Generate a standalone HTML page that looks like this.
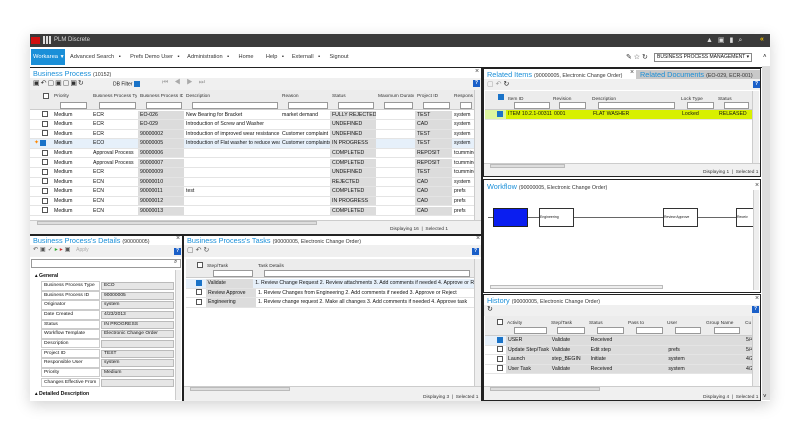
<!DOCTYPE html><html><head><meta charset="utf-8"><style>
*{box-sizing:border-box;margin:0;padding:0}
body{width:800px;height:445px;background:#fff;font-family:"Liberation Sans",sans-serif;font-size:5.2px;color:#111;position:relative;overflow:hidden;white-space:nowrap}
.a{position:absolute}
.t{color:#1a8fd8;font-size:7.3px}
.s{color:#333;font-size:5.3px}
.row{position:absolute;display:flex;height:9.6px;border-bottom:1px solid #e4e4e4;align-items:center;white-space:nowrap;overflow:hidden}
.row div{overflow:hidden;padding-left:2px;height:100%;line-height:9px}
.cb{display:inline-block;width:6px;height:6px;border:1px solid #555;background:#fff;vertical-align:middle}
.cbk{display:inline-block;width:6px;height:6px;background:#1a73c8;border:1px solid #1a73c8;vertical-align:middle}
.hdr{position:absolute;background:#ececec;border-bottom:1px solid #ccc}
.hc{position:absolute;font-size:4.8px;color:#333}
.inp{position:absolute;height:7px;background:#fff;border:1px solid #999}
.g{background:#dcdcdc}
.close{position:absolute;font-size:7px;color:#444}
.bar{position:absolute;background:#f0f0f0;border-top:1px solid #ccc}
.vs{position:absolute;background:#eee;border-left:1px solid #ccc}
.help{position:absolute;width:7px;height:7px;background:#1a5fc8;color:#fff;font-size:5px;text-align:center;line-height:7px;font-weight:bold}
</style></head><body>
<div class="a" style="left:30px;top:34px;width:740px;height:367px;box-shadow:0 4px 14px rgba(0,0,0,.18);background:#fff"></div>
<div class="a" style="left:30px;top:34px;width:740px;height:13px;background:#3a3a3a"></div>
<div class="a" style="left:31px;top:37px;width:9px;height:7px;background:#d01010"></div>
<div class="a" style="left:43px;top:36px;width:8px;height:8px;background:repeating-linear-gradient(90deg,#ddd 0 2px,transparent 2px 3px)"></div>
<div class="a" style="left:54px;top:37px;color:#ddd;font-size:6px">PLM Discrete</div>
<div class="a" style="left:706px;top:36px;color:#ddd;font-size:7px;letter-spacing:5px">▲▣▮⌕</div>
<div class="a" style="left:760px;top:36px;color:#f0c000;font-size:7px;font-weight:bold">«</div>
<div class="a" style="left:31px;top:49px;width:34px;height:16px;background:#1a8fd8;color:#fff;font-size:5.8px;line-height:16px;padding-left:2px">Workarea <span style="font-size:5px">▼</span></div>
<div class="a" style="left:70px;top:54px;font-size:5.6px;color:#333;white-space:pre">Advanced Search   ▪      Prefs Demo User   ▪     Administration   ▪      Home        Help   ▪     Externall   ▪      Signout</div>
<div class="a" style="left:626px;top:53px;font-size:7px;color:#333">✎ ☆ ↻</div>
<div class="a" style="left:654px;top:53px;width:98px;height:9px;border:1px solid #888;font-size:5px;padding-left:2px;line-height:7px">BUSINESS PROCESS MANAGEMENT ▾</div>
<div class="a" style="left:762px;top:66px;width:8px;height:334px;background:#ddd"></div>
<div class="a" style="left:763px;top:54px;font-size:6px">˄</div>
<div class="a" style="left:30px;top:67px;width:732px;height:1px;background:#222"></div>

<div class="a t" style="left:33px;top:69px">Business Process <span class="s">(10152)</span></div>
<div class="close" style="left:475px;top:68px">×</div>
<div class="a" style="left:30px;top:78px;width:451px;height:12px;background:#f0f0f0"></div>
<div class="a" style="left:33px;top:79px;font-size:7px;color:#333;letter-spacing:1px">▣↶▢▣▢▣↻</div>
<div class="a" style="left:113px;top:81px;font-size:5px">DB Filter <span class="cbk"></span></div>
<div class="a" style="left:162px;top:79px;font-size:7px;color:#aaa;letter-spacing:6px">⏮◀▶⏭</div>
<div class="help" style="left:473px;top:80px">?</div>
<div class="hdr" style="left:30px;top:90px;width:451px;height:20px"></div>
<div class="a" style="left:43px;top:93px"><span class="cb"></span></div>
<div class="hc" style="left:54px;top:94px">Priority</div>
<div class="hc" style="left:93px;top:94px;width:44px;overflow:hidden">Business Process Typ</div>
<div class="hc" style="left:140px;top:94px;width:43px;overflow:hidden">Business Process ID</div>
<div class="hc" style="left:186px;top:94px">Description</div>
<div class="hc" style="left:282px;top:94px">Reason</div>
<div class="hc" style="left:332px;top:94px">Status</div>
<div class="hc" style="left:378px;top:94px;width:36px;overflow:hidden">Maximum Duratio</div>
<div class="hc" style="left:417px;top:94px">Project ID</div>
<div class="hc" style="left:454px;top:94px;width:19px;overflow:hidden">Respons</div>
<div class="inp" style="left:60px;top:102px;width:27px"></div>
<div class="inp" style="left:99px;top:102px;width:37px"></div>
<div class="inp" style="left:146px;top:102px;width:36px"></div>
<div class="inp" style="left:192px;top:102px;width:86px"></div>
<div class="inp" style="left:288px;top:102px;width:40px"></div>
<div class="inp" style="left:338px;top:102px;width:36px"></div>
<div class="inp" style="left:384px;top:102px;width:29px"></div>
<div class="inp" style="left:423px;top:102px;width:27px"></div>
<div class="inp" style="left:460px;top:102px;width:12px"></div>
<div id="rows"></div>
<div class="vs" style="left:474px;top:90px;width:7px;height:130px"></div>
<div class="bar" style="left:30px;top:220px;width:451px;height:14px"></div>
<div class="a" style="left:37px;top:221px;width:280px;height:4px;background:#ddd;border:1px solid #bbb"></div>
<div class="a" style="left:390px;top:227px;font-size:4.8px;color:#333">Displaying 16 &nbsp;| &nbsp;Selected 1</div>
<div class="a" style="left:30px;top:234px;width:451px;height:2px;background:#222"></div>
<div class="a" style="left:481px;top:67px;width:2px;height:334px;background:#222"></div>

<div class="a t" style="left:33px;top:236px">Business Process's Details <span class="s">(90000005)</span></div>
<div class="close" style="left:176px;top:235px">×</div>
<div class="a" style="left:30px;top:245px;width:152px;height:12px;background:#f0f0f0"></div>
<div class="a" style="left:33px;top:246px;font-size:6px;color:#555;letter-spacing:2px">↶▣✓<span style="color:#3a3">▸</span><span style="color:#c33">▸</span>▣ <span style="color:#aaa;letter-spacing:0;font-size:5px">Apply</span></div>
<div class="help" style="left:174px;top:248px">?</div>
<div class="a" style="left:31px;top:259px;width:150px;height:9px;border:1px solid #999"></div>
<div class="a" style="left:174px;top:259px;font-size:6px">⌕</div>
<div class="a" style="left:35px;top:273px;font-size:5.2px;font-weight:bold">▴ General</div>
<div id="det"></div>
<div class="a" style="left:35px;top:391px;font-size:5.2px;font-weight:bold">▴ Detailed Description</div>
<div class="vs" style="left:175px;top:270px;width:6px;height:130px"></div>
<div class="a" style="left:182px;top:236px;width:2px;height:165px;background:#222"></div>

<div class="a t" style="left:187px;top:236px">Business Process's Tasks <span class="s">(90000005, Electronic Change Order)</span></div>
<div class="close" style="left:476px;top:235px">×</div>
<div class="a" style="left:184px;top:245px;width:297px;height:12px;background:#f0f0f0"></div>
<div class="a" style="left:187px;top:246px;font-size:7px;color:#555;letter-spacing:2px">▢↶↻</div>
<div class="help" style="left:472px;top:248px">?</div>
<div class="hdr" style="left:186px;top:259px;width:288px;height:19px"></div>
<div class="a" style="left:197px;top:262px"><span class="cb"></span></div>
<div class="hc" style="left:207px;top:264px">Step/Task</div>
<div class="hc" style="left:258px;top:264px">Task Details</div>
<div class="inp" style="left:213px;top:270px;width:40px"></div>
<div class="inp" style="left:264px;top:270px;width:206px"></div>
<div class="row" style="left:186px;top:279px;width:288px;background:#e6f0fa"><div style="width:20px;padding-left:10px"><span class="cbk"></span></div><div class="g" style="width:50px">Validate</div><div>1. Review Change Request 2. Review attachments 3. Add comments if needed 4. Approve or Reject</div></div>
<div class="row" style="left:186px;top:288.6px;width:288px"><div style="width:20px;padding-left:10px"><span class="cb"></span></div><div class="g" style="width:50px">Review Approve</div><div>1. Review Changes from Engineering 2. Add comments if needed 3. Approve or Reject</div></div>
<div class="row" style="left:186px;top:298.2px;width:288px"><div style="width:20px;padding-left:10px"><span class="cb"></span></div><div class="g" style="width:50px">Engineering</div><div>1. Review change request 2. Make all changes 3. Add comments if needed 4. Approve task</div></div>
<div class="vs" style="left:474px;top:259px;width:7px;height:128px"></div>
<div class="bar" style="left:184px;top:386px;width:297px;height:15px"></div>
<div class="a" style="left:190px;top:387px;width:100px;height:4px;background:#ddd;border:1px solid #bbb"></div>
<div class="a" style="left:423px;top:395px;font-size:4.8px;color:#333">Displaying 3 &nbsp;| &nbsp;Selected 1</div>

<div class="a" style="left:483px;top:68px;width:278px;height:109px;border:1px solid #222"></div>
<div class="a" style="left:636px;top:70px;width:124px;height:9px;background:#c8c8c8"></div>
<div class="a t" style="left:487px;top:70px">Related Items <span class="s">(90000005, Electronic Change Order)</span></div>
<div class="close" style="left:630px;top:69px">×</div>
<div class="a t" style="left:640px;top:70px">Related Documents <span class="s">(EO-029, ECR-001)</span></div>
<div class="a" style="left:484px;top:79px;width:276px;height:11px;background:#f0f0f0"></div>
<div class="a" style="left:487px;top:80px;font-size:7px;color:#999;letter-spacing:2px">▢↶<span style="color:#222">↻</span></div>
<div class="help" style="left:753px;top:81px">?</div>
<div class="hdr" style="left:485px;top:91px;width:267px;height:19px"></div>
<div class="a" style="left:498px;top:94px"><span class="cbk"></span></div>
<div class="hc" style="left:508px;top:97px">Item ID</div>
<div class="hc" style="left:553px;top:97px">Revision</div>
<div class="hc" style="left:592px;top:97px">Description</div>
<div class="hc" style="left:681px;top:97px">Lock Type</div>
<div class="hc" style="left:718px;top:97px">Status</div>
<div class="inp" style="left:514px;top:102px;width:36px"></div>
<div class="inp" style="left:559px;top:102px;width:27px"></div>
<div class="inp" style="left:598px;top:102px;width:77px"></div>
<div class="inp" style="left:687px;top:102px;width:27px"></div>
<div class="inp" style="left:724px;top:102px;width:25px"></div>
<div class="row" style="left:485px;top:110px;width:267px;background:#ddf5a0"><div style="width:21px;padding-left:12px"><span class="cbk"></span></div><div style="width:46px;background:#d8f000">ITEM 10.2.1-00311</div><div style="width:39px;background:#d8f000">0001</div><div style="width:89px;background:#d8f000">FLAT WASHER</div><div style="width:37px;background:#d8f000">Locked</div><div style="width:35px;background:#d8f000">RELEASED</div></div>
<div class="vs" style="left:752px;top:91px;width:7px;height:72px"></div>
<div class="bar" style="left:484px;top:163px;width:276px;height:13px"></div>
<div class="a" style="left:490px;top:164px;width:75px;height:4px;background:#ddd;border:1px solid #bbb"></div>
<div class="a" style="left:703px;top:170px;font-size:4.8px;color:#333">Displaying 1 &nbsp;| &nbsp;Selected 1</div>

<div class="a" style="left:483px;top:179px;width:278px;height:114px;border:1px solid #222"></div>
<div class="a t" style="left:487px;top:182px">Workflow <span class="s">(90000005, Electronic Change Order)</span></div>
<div class="close" style="left:755px;top:182px">×</div>
<div class="a" style="left:488px;top:217px;width:268px;height:1px;background:#666"></div>
<div class="a" style="left:493px;top:208px;width:35px;height:19px;background:#0a1ef0;border:1px solid #222"></div>
<div class="a" style="left:539px;top:208px;width:35px;height:19px;background:#fff;border:1px solid #333;font-size:3.5px;padding-top:6px">Engineering</div>
<div class="a" style="left:663px;top:208px;width:35px;height:19px;background:#fff;border:1px solid #333;font-size:3.5px;padding-top:6px">Review Approve</div>
<div class="a" style="left:736px;top:208px;width:20px;height:19px;background:#fff;border:1px solid #333;font-size:3.5px;padding-top:6px;overflow:hidden">Receiv</div>
<div class="vs" style="left:753px;top:190px;width:6px;height:100px"></div>
<div class="a" style="left:490px;top:285px;width:173px;height:4px;background:#eee;border:1px solid #bbb"></div>

<div class="a" style="left:483px;top:294px;width:278px;height:107px;border:1px solid #222"></div>
<div class="a t" style="left:487px;top:296px">History <span class="s">(90000005, Electronic Change Order)</span></div>
<div class="close" style="left:755px;top:295px">×</div>
<div class="a" style="left:484px;top:305px;width:276px;height:11px;background:#f0f0f0"></div>
<div class="a" style="left:487px;top:305px;font-size:7px">↻</div>
<div class="help" style="left:752px;top:306px">?</div>
<div class="hdr" style="left:485px;top:316px;width:267px;height:20px"></div>
<div class="a" style="left:497px;top:319px"><span class="cb"></span></div>
<div class="hc" style="left:507px;top:321px">Activity</div>
<div class="hc" style="left:551px;top:321px">Step/Task</div>
<div class="hc" style="left:589px;top:321px">Status</div>
<div class="hc" style="left:628px;top:321px">Pass to</div>
<div class="hc" style="left:667px;top:321px">User</div>
<div class="hc" style="left:706px;top:321px">Group Name</div>
<div class="hc" style="left:745px;top:321px">Cu</div>
<div class="inp" style="left:514px;top:327px;width:33px"></div>
<div class="inp" style="left:557px;top:327px;width:28px"></div>
<div class="inp" style="left:597px;top:327px;width:27px"></div>
<div class="inp" style="left:636px;top:327px;width:27px"></div>
<div class="inp" style="left:675px;top:327px;width:26px"></div>
<div class="inp" style="left:714px;top:327px;width:26px"></div>
<div id="hist"></div>
<div class="vs" style="left:752px;top:316px;width:7px;height:70px"></div>
<div class="bar" style="left:484px;top:386px;width:276px;height:14px"></div>
<div class="a" style="left:490px;top:387px;width:110px;height:4px;background:#ddd;border:1px solid #bbb"></div>
<div class="a" style="left:703px;top:395px;font-size:4.8px;color:#333">Displaying 4 &nbsp;| &nbsp;Selected 1</div>
<div class="a" style="left:763px;top:394px;font-size:6px">˅</div>

<script>
var R=[["ECR","EO-026","New Bearing for Bracket","market demand","FULLY REJECTED","TEST","system"],
["ECR","EO-029","Introduction of Screw and Washer","","UNDEFINED","CAD","system"],
["ECR","90000002","Introduction of improved wear resistance","Customer complaint","UNDEFINED","TEST","system"],
["ECO","90000005","Introduction of Flat washer to reduce wear","Customer complaints","IN PROGRESS","TEST","system"],
["Approval Process","90000006","","","COMPLETED","REPOSIT","tcumming"],
["Approval Process","90000007","","","COMPLETED","REPOSIT","tcumming"],
["ECR","90000009","","","UNDEFINED","TEST","tcumming"],
["ECN","90000010","","","REJECTED","CAD","system"],
["ECN","90000011","test","","COMPLETED","CAD","prefs"],
["ECN","90000012","","","IN PROGRESS","CAD","prefs"],
["ECN","90000013","","","COMPLETED","CAD","prefs"]];
var h="";R.forEach(function(r,i){var y=110.5+i*9.6;var sel=i==3;
h+='<div class="row" style="left:30px;top:'+y+'px;width:444px;'+(sel?'background:#e6f0fa':'')+'"><div style="width:22px;padding-left:'+(sel?'4':'12')+'px">'+(sel?'<span style="color:#f80;font-size:6px">✦</span> <span class="cbk"></span>':'<span class="cb"></span>')+'</div><div style="width:39px">Medium</div><div style="width:47px">'+r[0]+'</div><div class="g" style="width:46px">'+r[1]+'</div><div style="width:96px">'+r[2]+'</div><div style="width:50px">'+r[3]+'</div><div class="g" style="width:46px">'+r[4]+'</div><div style="width:39px"></div><div class="g" style="width:37px">'+r[5]+'</div><div style="width:22px">'+r[6]+'</div></div>';});
document.getElementById("rows").innerHTML=h;
var D=[["Business Process Type","ECO"],["Business Process ID","90000005"],["Originator","system"],["Date Created","4/23/2013"],["Status","IN PROGRESS"],["Workflow Template","Electronic Change Order"],["Description",""],["Project ID","TEST"],["Responsible User","system"],["Priority","Medium"],["Changes Effective From",""]];
h="";D.forEach(function(d,i){var y=281+i*9.65;h+='<div class="a" style="left:41px;top:'+y+'px;width:59px;height:9.6px;border:1px solid #ccc;padding-left:2px;line-height:8px;font-size:4.9px;overflow:hidden">'+d[0]+'</div><div class="a" style="left:101px;top:'+(y+1)+'px;width:73px;height:8px;border:1px solid #bbb;background:#e6e6e6;padding-left:2px;line-height:6px;font-size:4.9px">'+d[1]+'</div>';});
document.getElementById("det").innerHTML=h;
var H=[["USER","Validate","Received","","","5/4"],["Update Step/Task","Validate","Edit step","","prefs","5/4"],["Launch","step_BEGIN","Initiate","","system","4/23"],["User Task","Validate","Received","","system","4/23"]];
h="";H.forEach(function(r,i){var y=336+i*9.6;h+='<div class="row" style="left:485px;top:'+y+'px;width:267px;'+(i==0?'background:#e6f0fa':'')+'"><div style="width:21px;padding-left:12px">'+(i==0?'<span class="cbk"></span>':'<span class="cb"></span>')+'</div><div class="g" style="width:44px">'+r[0]+'</div><div class="g" style="width:39px">'+r[1]+'</div><div class="g" style="width:39px">'+r[2]+'</div><div class="g" style="width:39px">'+r[3]+'</div><div class="g" style="width:39px">'+r[4]+'</div><div class="g" style="width:39px"></div><div class="g" style="width:8px">'+r[5]+'</div></div>';});
document.getElementById("hist").innerHTML=h;
</script>
</body></html>
